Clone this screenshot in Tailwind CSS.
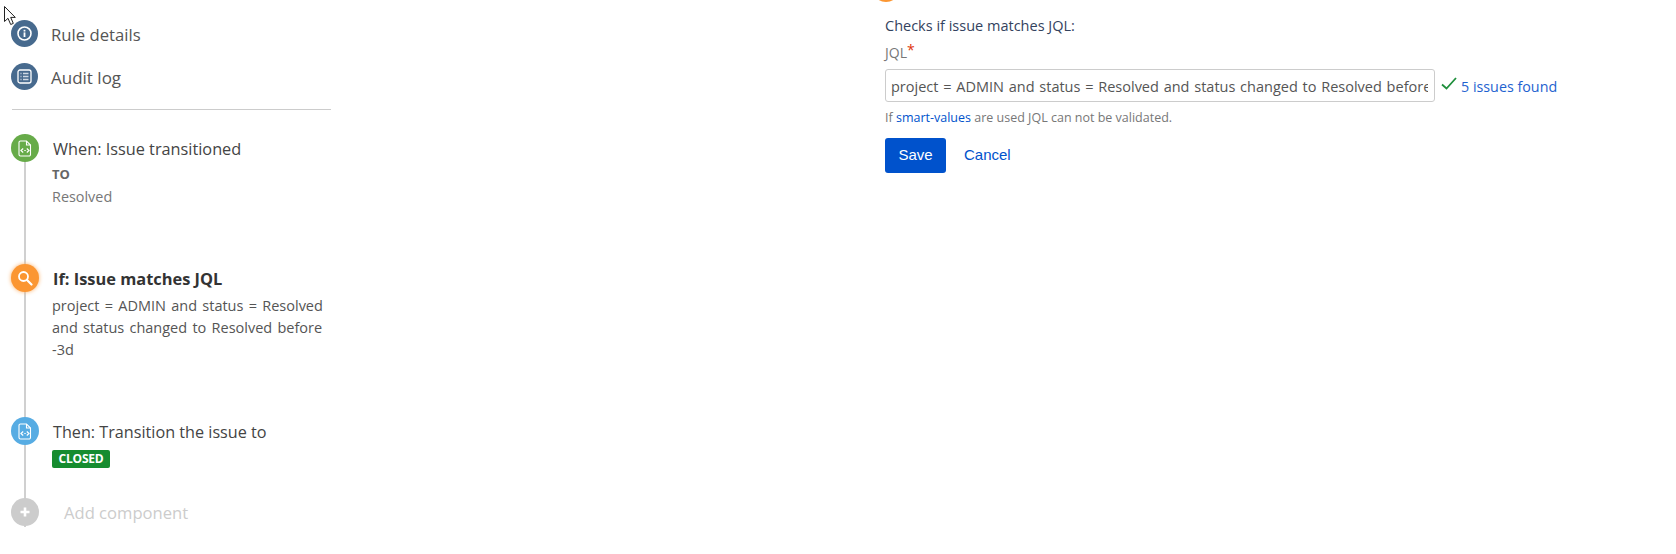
<!DOCTYPE html>
<html lang="en">
<head>
  <meta charset="UTF-8" />
  <title>Rule</title>
  <script src="https://cdn.jsdelivr.net/npm/@tailwindcss/browser@4"></script>
</head>
<body class="bg-white font-['Open_Sans',sans-serif] overflow-hidden">
<div class="relative flex h-[554px] w-[1676px]">

  <!-- mouse cursor -->
  <svg class="absolute left-[3px] top-[5px] z-10" width="15" height="21" viewBox="0 0 15 21"><path d="M1.5 1.5v15l3.5-3.2 2.7 6.2 2.6-1.1-2.6-6h4.6z" fill="#fff" stroke="#222" stroke-width="1"/></svg>

  <!-- left column -->
  <div class="ml-[11px] w-[320px] shrink-0 pt-[20px]">
    <div class="flex h-[27px] items-center gap-[13px]">
      <div class="flex h-[27px] w-[27px] items-center justify-center rounded-full bg-[#476a8e]">
        <svg width="17" height="17" viewBox="0 0 17 17" fill="none"><circle cx="8.5" cy="8.5" r="6.5" stroke="#fff" stroke-width="1.6"/><rect x="7.6" y="7.4" width="1.8" height="4.6" fill="#fff"/><rect x="7.6" y="4.8" width="1.8" height="1.7" fill="#fff"/></svg>
      </div>
      <span class="relative top-[1px] text-[16.7px] text-[#555]">Rule details</span>
    </div>
    <div class="mt-[16px] flex h-[27px] items-center gap-[13px]">
      <div class="flex h-[27px] w-[27px] items-center justify-center rounded-full bg-[#476a8e]">
        <svg width="17" height="17" viewBox="0 0 17 17" fill="none"><rect x="2" y="2" width="13" height="13" rx="2" stroke="#fff" stroke-width="1.3"/><path d="M4.5 5.5h1M7 5.5h5.5M4.5 8.500h1M7 8.500h5.5M4.500 11.500h1M7 11.500h5.500" stroke="#cfd9e4" stroke-width="1.3"/></svg>
      </div>
      <span class="relative top-[1px] text-[17px] text-[#555]">Audit log</span>
    </div>
    <div class="mt-[19px] ml-[1px] h-px w-[319px] bg-[#ccc]"></div>

    <!-- timeline -->
    <div class="relative mt-[24px]">
      <div class="absolute left-[13px] top-0 h-[393px] w-[2px] bg-[#d0d0d0]"></div>

      <div class="relative h-[130px]">
        <div class="flex items-center gap-[14px]">
          <div class="flex h-[28px] w-[28px] shrink-0 items-center justify-center rounded-full bg-[#67ab49]">
            <svg width="14" height="17" viewBox="0 0 14 17" fill="none"><path d="M2.500 1h6l4 4v9.500a1.500 1.500 0 0 1-1.500 1.500H2.500A1.500 1.500 0 0 1 1 14.500v-12A1.500 1.500 0 0 1 2.500 1z" stroke="#fff" stroke-width="1.100"/><path d="M8.500 1v4h4" stroke="#fff" stroke-width="1.100"/><path d="M5.200 8.500L3 10.500l2.200 2M8.800 8.500l2.200 2-2.200 2" stroke="#fff" stroke-width="1.200"/><path d="M6.300 10.500h1.400" stroke="#fff" stroke-width="1.200"/></svg>
          </div>
          <span class="relative top-[1px] text-[16.3px] text-[#444]">When: Issue transitioned</span>
        </div>
        <div class="ml-[41px] mt-[3px] text-[13px] font-bold leading-[18px] text-[#666]">TO</div>
        <div class="ml-[41px] mt-[4px] text-[14.4px] leading-[20px] text-[#777]">Resolved</div>
      </div>

      <div class="relative h-[153px]">
        <div class="flex items-center gap-[14px]">
          <div class="flex h-[28px] w-[28px] shrink-0 items-center justify-center rounded-full bg-[#fb9632] shadow-[0_0_4px_#fbb26c]">
            <svg width="16" height="16" viewBox="0 0 16 16" fill="none"><circle cx="6.500" cy="6.500" r="4.500" stroke="#fff" stroke-width="1.800"/><path d="M10 10l4.500 4.500" stroke="#fff" stroke-width="2.200" stroke-linecap="round"/></svg>
          </div>
          <span class="relative top-[1px] text-[16.4px] font-bold text-[#333]">If: Issue matches JQL</span>
        </div>
        <div class="ml-[41px] mt-[3px] w-[280px] text-[14.5px] leading-[22px] text-[#555] [word-spacing:1.5px]">project = ADMIN and status = Resolved and status changed to Resolved before -3d</div>
      </div>

      <div class="relative h-[81px]">
        <div class="flex items-center gap-[14px]">
          <div class="flex h-[28px] w-[28px] shrink-0 items-center justify-center rounded-full bg-[#57ace3]">
            <svg width="14" height="17" viewBox="0 0 14 17" fill="none"><path d="M2.500 1h6l4 4v9.500a1.500 1.500 0 0 1-1.500 1.500H2.500A1.500 1.500 0 0 1 1 14.500v-12A1.500 1.500 0 0 1 2.500 1z" stroke="#fff" stroke-width="1.100"/><path d="M8.500 1v4h4" stroke="#fff" stroke-width="1.100"/><path d="M5.200 8.500L3 10.500l2.200 2M8.800 8.500l2.200 2-2.200 2" stroke="#fff" stroke-width="1.200"/><path d="M6.300 10.500h1.400" stroke="#fff" stroke-width="1.200"/></svg>
          </div>
          <span class="relative top-[1px] text-[16.2px] text-[#444]">Then: Transition the issue to</span>
        </div>
        <div class="ml-[41px] mt-[5px] flex h-[18px] w-[58px] items-center justify-center rounded-[2px] bg-[#168c2f] text-[12px] font-bold tracking-[-0.2px] text-white">CLOSED</div>
      </div>

      <div class="relative flex items-center gap-[25px]">
        <div class="flex h-[28px] w-[28px] shrink-0 items-center justify-center rounded-full bg-[#ccc]">
          <svg width="12" height="12" viewBox="0 0 12 12"><path d="M6 1.500v9M1.500 6h9" stroke="#fff" stroke-width="2.600"/></svg>
        </div>
        <span class="relative top-[1px] text-[16.6px] text-[#ccc]">Add component</span>
      </div>
    </div>
  </div>

  <!-- right column -->
  <div class="relative ml-[554px] w-[700px] pt-[16px]">
    <div class="absolute left-[-13px] top-[-26px] h-[28px] w-[28px] rounded-full bg-[#fb9632]"></div>
    <div class="text-[14.5px] leading-[20px] text-[#33425e]">Checks if issue matches JQL:</div>
    <div class="mt-[7px] text-[14px] leading-[20px] text-[#777]">JQL<span class="relative top-[-3px] text-[#de350b]">*</span></div>
    <div class="mt-[6px] flex items-center">
      <input class="h-[33px] w-[550px] rounded-[3px] border border-[#ccc] pt-[2px] pr-[6px] pl-[5px] text-[14.5px] text-[#555] outline-none [word-spacing:1px]" value="project = ADMIN and status = Resolved and status changed to Resolved before -3d" />
      <svg class="ml-[6px] mb-[5px]" width="16" height="13" viewBox="0 0 16 13" fill="none"><path d="M1 7.500l4.500 4L15 1" stroke="#1f8f3c" stroke-width="1.800"/></svg>
      <span class="relative top-[1px] ml-[4px] text-[14.3px] text-[#1e62d0]">5 issues found</span>
    </div>
    <div class="mt-[8px] text-[12.5px] leading-[16px] text-[#777]">If <span class="text-[#0052cc]">smart-values</span> are used JQL can not be validated.</div>
    <div class="mt-[12px] flex items-center font-['Liberation_Sans',sans-serif]">
      <button class="h-[35px] w-[61px] rounded-[3px] bg-[#0052cc] text-[15px] text-white">Save</button>
      <span class="ml-[18px] text-[15px] text-[#0052cc]">Cancel</span>
    </div>
  </div>
</div>
</body>
</html>
